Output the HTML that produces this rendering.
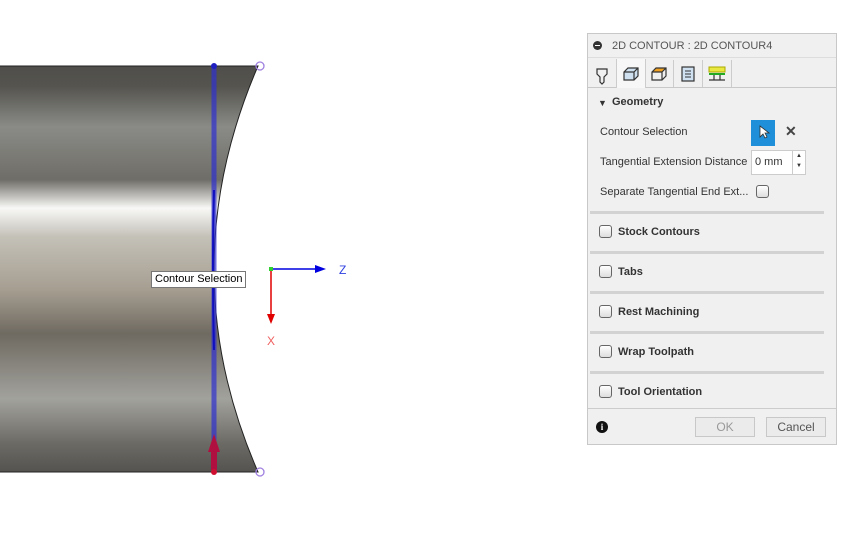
<!DOCTYPE html><html><head><style>
body{margin:0;width:851px;height:559px;background:#fff;position:relative;overflow:hidden;font-family:"Liberation Sans",sans-serif;}
.p{position:absolute;left:587px;top:33px;width:248px;height:410px;background:#f0f0f0;border:1px solid #c8c8c8;font-size:11px;color:#333}
.a{position:absolute}
.sep{position:absolute;left:2px;width:234px;height:3px;background:#d2d2d2}
.cb{position:absolute;width:11px;height:11px;border:1px solid #666;border-radius:3px;background:linear-gradient(#fff,#ddd)}
.sec{position:absolute;left:30px;font-weight:bold;font-size:11px;color:#333}
.tab{position:absolute;top:26px;width:28px;height:27px;border-right:1px solid #ccc}
</style></head><body>
<svg class="a" style="left:0;top:0" width="400" height="559">
<defs><linearGradient id="g" x1="0" y1="66" x2="0" y2="472" gradientUnits="userSpaceOnUse">
<stop offset="0" stop-color="#4f4e4a"/><stop offset="0.05" stop-color="#55544f"/>
<stop offset="0.15" stop-color="#8a8b87"/><stop offset="0.28" stop-color="#6f6d67"/>
<stop offset="0.35" stop-color="#f8f8f6"/><stop offset="0.42" stop-color="#c4c1b8"/>
<stop offset="0.55" stop-color="#a69e91"/><stop offset="0.66" stop-color="#6f6a61"/>
<stop offset="0.82" stop-color="#a2a29d"/><stop offset="0.93" stop-color="#6c6a65"/>
<stop offset="1" stop-color="#55534f"/></linearGradient></defs>
<path d="M0 66 L258 66 Q170 270 258 472 L0 472 Z" fill="url(#g)"/>
<path d="M0 66 L258 66 Q170 270 258 472 L0 472" fill="none" stroke="#222" stroke-width="1"/>
<line x1="214" y1="66" x2="214" y2="472" stroke="#3030d0" stroke-width="5" opacity="0.7"/>
<path d="M214 190 Q212 270 214 350" stroke="#1010c0" stroke-width="2" fill="none"/>
<path d="M208 452 L214 434 L220 452 L217 452 L217 470 L211 470 L211 452Z" fill="#b01040"/>
<circle cx="214" cy="66" r="3" fill="#2020c0"/><circle cx="214" cy="472" r="3" fill="#d01030"/>
<circle cx="260" cy="66" r="4" fill="none" stroke="#a080e0" stroke-width="1.3"/>
<circle cx="260" cy="472" r="4" fill="none" stroke="#a080e0" stroke-width="1.3"/>
<line x1="271" y1="269" x2="318" y2="269" stroke="#0000e0" stroke-width="1.5"/><path d="M315 265 L326 269 L315 273Z" fill="#0000e0"/>
<line x1="271" y1="269" x2="271" y2="316" stroke="#e00000" stroke-width="1.5"/><path d="M267 314 L271 324 L275 314Z" fill="#e00000"/>
<rect x="269" y="267" width="4" height="4" fill="#30d030"/>
<text x="339" y="274" font-family="Liberation Sans" font-size="12" fill="#3040e0">Z</text>
<text x="267" y="345" font-family="Liberation Sans" font-size="12" fill="#f06060">X</text>
</svg>
<div class="a" style="left:151px;top:271px;height:15px;padding:0 3px;background:#fff;border:1px solid #777;font-size:11px;line-height:15px;color:#000">Contour Selection</div>
<div class="p">
<div class="a" style="left:0;top:0;width:248px;height:23px;border-bottom:1px solid #ddd"></div>
<div class="a" style="left:5px;top:7px;width:9px;height:9px;border-radius:50%;background:#333"></div>
<div class="a" style="left:7px;top:11px;width:5px;height:1px;background:#fff"></div>
<div class="a" style="left:24px;top:6px;color:#555;font-size:11px">2D CONTOUR : 2D CONTOUR4</div>
<div class="a" style="left:0;top:53px;width:248px;height:1px;background:#c8c8c8"></div>
<div class="tab" style="left:0"></div>
<div class="tab" style="left:28px;background:#f7f7f7;border-left:1px solid #ccc;top:25px;height:29px"></div>
<div class="tab" style="left:57px"></div><div class="tab" style="left:86px"></div><div class="tab" style="left:115px"></div>
<svg class="a" style="left:0;top:26px" width="145" height="27">
<path d="M9 9 h10 v5 l-3 3 v5 l-2 2 l-2 -2 v-5 l-3 -3z" fill="none" stroke="#333" stroke-width="1.2"/>
<path d="M36 12 l4 -4 h10 v8 l-4 4 h-10z M36 12 h10 v8 M46 12 l4 -4" fill="#cfe0f0" stroke="#333" stroke-width="1.2"/>
<path d="M64 12 l4 -4 h10 l-4 4z" fill="#f0a020"/>
<path d="M64 12 l4 -4 h10 v8 l-4 4 h-10z M64 12 h10 v8 M74 12 l4 -4" fill="none" stroke="#333" stroke-width="1.2"/>
<rect x="94" y="7" width="12" height="14" fill="#cfe0f0" stroke="#333" stroke-width="1.2"/><path d="M97 11h6M97 14h6M97 17h6" stroke="#333"/>
<rect x="121" y="7" width="16" height="5" fill="#e8e840" stroke="#aa0"/><path d="M121 14h16 M126 14v6h6v-6 M121 20h16" stroke="#333" fill="none" stroke-width="1.2"/><path d="M121 14h16" stroke="#2a2" stroke-width="2"/>
</svg>
<div class="a" style="left:10px;top:64px;font-size:9px">▼</div>
<div class="a" style="left:24px;top:62px;font-weight:bold;font-size:11px">Geometry</div>
<div class="a" style="left:12px;top:92px">Contour Selection</div>
<div class="a" style="left:163px;top:86px;width:24px;height:26px;background:#1e8fd8"></div>
<svg class="a" style="left:169px;top:90px" width="14" height="16"><path d="M3 2 v11 l3 -3 l2 4 l2 -1 l-2 -4 h4z" fill="#fff" stroke="#333" stroke-width="0.8"/></svg>
<div class="a" style="left:197px;top:89px;font-size:14px;font-weight:bold;color:#444">✕</div>
<div class="a" style="left:12px;top:122px">Tangential Extension Distance</div>
<div class="a" style="left:163px;top:116px;width:38px;height:23px;background:#fff;border:1px solid #ccc;line-height:23px;padding-left:3px">0 mm</div>
<div class="a" style="left:204px;top:116px;width:12px;height:23px;background:#fff;border:1px solid #ccc;font-size:6px;line-height:10px;text-align:center">▲<br>▼</div>
<div class="a" style="left:12px;top:152px">Separate Tangential End Ext...</div>
<div class="cb" style="left:168px;top:151px"></div>
<div class="sep" style="top:177px"></div>
<div class="cb" style="left:11px;top:191px"></div><div class="sec" style="top:192px">Stock Contours</div>
<div class="sep" style="top:217px"></div>
<div class="cb" style="left:11px;top:231px"></div><div class="sec" style="top:232px">Tabs</div>
<div class="sep" style="top:257px"></div>
<div class="cb" style="left:11px;top:271px"></div><div class="sec" style="top:272px">Rest Machining</div>
<div class="sep" style="top:297px"></div>
<div class="cb" style="left:11px;top:311px"></div><div class="sec" style="top:312px">Wrap Toolpath</div>
<div class="sep" style="top:337px"></div>
<div class="cb" style="left:11px;top:351px"></div><div class="sec" style="top:352px">Tool Orientation</div>
<div class="a" style="left:0;top:374px;width:248px;height:1px;background:#ccc"></div>
<div class="a" style="left:8px;top:387px;width:12px;height:12px;border-radius:50%;background:#111;color:#fff;font-size:9px;font-weight:bold;text-align:center;line-height:12px;font-family:'Liberation Serif',serif">i</div>
<div class="a" style="left:107px;top:383px;width:58px;height:18px;border:1px solid #c8c8c8;background:#ebebeb;color:#999;text-align:center;line-height:18px;font-size:12px">OK</div>
<div class="a" style="left:178px;top:383px;width:58px;height:18px;border:1px solid #c8c8c8;background:#ebebeb;color:#555;text-align:center;line-height:18px;font-size:12px">Cancel</div>
</div>
</body></html>
